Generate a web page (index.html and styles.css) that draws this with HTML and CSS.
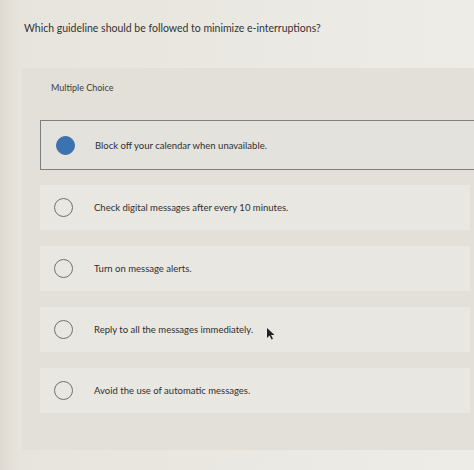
FILE: index.html
```html
<!DOCTYPE html>
<html>
<head>
<meta charset="utf-8">
<link rel="stylesheet" href="styles.css">
</head>
<body>
<div class="screen">
  <p class="question">Which guideline should be followed to minimize e-interruptions?</p>
  <div class="panel">
    <div class="label">Multiple Choice</div>
    <div class="options">
      <div class="option selected"><span class="radio"></span><span class="text">Block off your calendar when unavailable.</span></div>
      <div class="option"><span class="radio"></span><span class="text">Check digital messages after every 10 minutes.</span></div>
      <div class="option"><span class="radio"></span><span class="text">Turn on message alerts.</span></div>
      <div class="option"><span class="radio"></span><span class="text">Reply to all the messages immediately.</span><span class="cursor"><svg width="8" height="12" viewBox="0 0 8 12"><path d="M0 0 L0 10 L2.5 7.5 L4.5 11.5 L6 10.8 L4 7 L7.5 7 Z" fill="#222"/></svg></span></div>
      <div class="option"><span class="radio"></span><span class="text">Avoid the use of automatic messages.</span></div>
    </div>
  </div>
</div>
</body>
</html>
```
FILE: styles.css
```css
html, body { margin: 0; padding: 0; }
body {
  width: 474px;
  height: 470px;
  overflow: hidden;
  background: #e9e6df;
  font-family: Lato, "Open Sans", sans-serif;
  color: #353535;
}
.screen {
  height: 470px;
  padding: 21px 0 0 0;
  box-sizing: border-box;
  background: linear-gradient(to right, #dedad2 0, #e7e4dd 20px, #ebe9e3 60%, #eeece7 100%);
}
.question {
  margin: 0 0 0 24px;
  font-size: 10.5px;
  line-height: 14px;
  color: #333;
}
.panel {
  margin: 33px 0 0 22px;
  height: 382px;
  background: #e3e0d9;
  padding: 14px 0 0 18px;
  box-sizing: border-box;
}
.label {
  margin-left: 11px;
  font-size: 9px;
  line-height: 12px;
  color: #3c3c3c;
}
.options {
  margin-top: 26px;
  display: flex;
  flex-direction: column;
  gap: 16px;
}
.option {
  display: flex;
  align-items: center;
  height: 45px;
  background: #e9e7e1;
  margin-right: 4px;
  position: relative;
  font-size: 9.5px;
  color: #2f2f2f;
}
.option.selected {
  height: 50px;
  margin-right: -2px;
  border: 1px solid #7f7f7f;
  background: #e4e2dc;
  box-sizing: border-box;
  margin-bottom: -1px;
}
.radio {
  width: 19px;
  height: 19px;
  border: 1px solid #6f6f6f;
  border-radius: 50%;
  margin-left: 14px;
  box-sizing: border-box;
  flex: none;
}
.selected .radio {
  width: 19px;
  height: 19px;
  margin-left: 15px;
  background: #3b73b0;
  border-color: #3b6ea6;
}
.text {
  margin-left: 21px;
}
.selected .text { margin-left: 20px; }
.cursor {
  margin-left: 14px;
  margin-top: 8px;
  display: flex;
}
```
